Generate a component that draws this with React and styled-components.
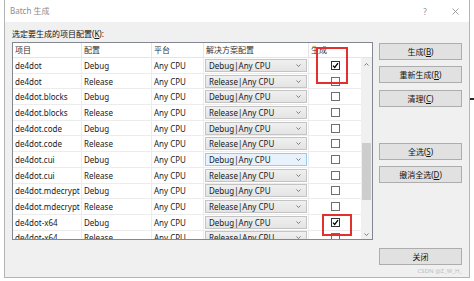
import React from "react";
import styled, { createGlobalStyle } from "styled-components";

const GlobalStyle = createGlobalStyle`
  html, body {
    margin: 0;
    padding: 0;
    background: #fff;
  }
  body {
    font-family: "Noto Sans", "Noto Sans CJK SC", sans-serif;
    font-size: 8px;
    color: #1a1a1a;
  }
  * {
    box-sizing: border-box;
  }
`;

// DATA
const rows = [
  ["de4dot", "Debug", true],
  ["de4dot", "Release", false],
  ["de4dot.blocks", "Debug", false],
  ["de4dot.blocks", "Release", false],
  ["de4dot.code", "Debug", false],
  ["de4dot.code", "Release", false],
  ["de4dot.cui", "Debug", false, true],
  ["de4dot.cui", "Release", false],
  ["de4dot.mdecrypt", "Debug", false],
  ["de4dot.mdecrypt", "Release", false],
  ["de4dot-x64", "Debug", true],
  ["de4dot-x64", "Release", false],
];

const Chevron = ({ up }) => (
  <svg width="5" height="3" viewBox="0 0 5 3">
    <path
      d={up ? "M0.5 2.5 L2.5 0.5 L4.5 2.5" : "M0.5 0.5 L2.5 2.5 L4.5 0.5"}
      stroke="#707070"
      strokeWidth="0.9"
      fill="none"
    />
  </svg>
);

const App = () => {
  return (
    <>
      <GlobalStyle />
      <Screen>
        <Window>
          <TitleBar>
            <Title>Batch 生成</Title>
            <TitleButton>?</TitleButton>
            <TitleButton>
              <svg width="7" height="7" viewBox="0 0 7 7">
                <path d="M0.5 0.5 L6.5 6.5 M6.5 0.5 L0.5 6.5" stroke="#8a8a8a" strokeWidth="0.8" />
              </svg>
            </TitleButton>
          </TitleBar>

          <Body>
            <Caption>
              选定要生成的项目配置(<u>K</u>):
            </Caption>

            <Grid>
              <HeadRow>
                <HeadCell>项目</HeadCell>
                <HeadCell>配置</HeadCell>
                <HeadCell>平台</HeadCell>
                <HeadCell>解决方案配置</HeadCell>
                <HeadCell last>生成</HeadCell>
              </HeadRow>
              <BodyWrap>
                <Rows>
                  {rows.map(([project, config, checked, hover], index) => (
                    <Row key={index}>
                      <Cell>{project}</Cell>
                      <Cell>{config}</Cell>
                      <Cell>Any CPU</Cell>
                      <ComboCell>
                        <Combo hover={hover}>
                          <span>{config}|Any CPU</span>
                          <Chevron />
                        </Combo>
                      </ComboCell>
                      <CheckCell>
                        <CheckBox checked={checked}>
                          {checked && (
                            <svg width="7" height="7" viewBox="0 0 7 7">
                              <path d="M1 3.6 L2.7 5.4 L6 1.1" stroke="#000" strokeWidth="1.3" fill="none" />
                            </svg>
                          )}
                        </CheckBox>
                      </CheckCell>
                    </Row>
                  ))}
                </Rows>
                <ScrollBar>
                  <ArrowUp>
                    <Chevron up />
                  </ArrowUp>
                  <Track>
                    <Thumb />
                  </Track>
                  <ArrowDown>
                    <Chevron />
                  </ArrowDown>
                </ScrollBar>
              </BodyWrap>
            </Grid>

            <Side>
              <Button>
                生成(<u>B</u>)
              </Button>
              <Button>
                重新生成(<u>R</u>)
              </Button>
              <Button gap="36px">
                清理(<u>C</u>)
              </Button>
              <Button>
                全选(<u>S</u>)
              </Button>
              <Button>
                撤消全选(<u>D</u>)
              </Button>
              <Button push>关闭</Button>
            </Side>
          </Body>
        </Window>

        <Mark first />
        <Mark />
        <EdgeTick />
        <Watermark>CSDN @Z_W_H_</Watermark>
      </Screen>
    </>
  );
};

const Screen = styled.div`
  position: relative;
  width: 474px;
  height: 281px;
  overflow: hidden;
  padding-left: 4px;
  background: #fff;
`;

const Window = styled.div`
  width: 466px;
  height: 278px;
  border: 1px solid #b4b4b4;
  border-top: none;
  background: #f0f0f0;
  display: flex;
  flex-direction: column;
`;

const TitleBar = styled.div`
  height: 22px;
  background: #fff;
  display: flex;
  align-items: center;
  padding-left: 5px;
  gap: 2px;
`;

const Title = styled.div`
  flex: 1;
  color: #8c8c8c;
  font-size: 8px;
  line-height: 12px;
`;

const TitleButton = styled.div`
  width: 28px;
  height: 22px;
  display: flex;
  align-items: center;
  justify-content: center;
  color: #8c8c8c;
  font-size: 8px;
`;

const Body = styled.div`
  flex: 1;
  display: grid;
  grid-template-columns: 361px 83px;
  grid-template-rows: auto 1fr;
  column-gap: 6px;
  padding: 6px 0 12px 7px;
`;

const Caption = styled.div`
  grid-column: 1 / span 2;
  height: 12px;
  line-height: 12px;
  margin-bottom: 2px;
  color: #111;

  u {
    text-underline-offset: 1px;
  }
`;

const Grid = styled.div`
  align-self: start;
  height: 198px;
  border: 1px solid #828790;
  background: #fff;
  display: flex;
  flex-direction: column;
  overflow: hidden;
`;

const HeadRow = styled.div`
  display: grid;
  grid-template-columns: 69px 70px 52px 105px 1fr;
  height: 15px;
  flex-shrink: 0;
  border-bottom: 1px solid #e5e5e5;
`;

const HeadCell = styled.div`
  padding-left: 2px;
  line-height: 14px;
  color: #333;
  border-right: ${(p) => (p.last ? "none" : "1px solid #e5e5e5")};
  white-space: nowrap;
`;

const BodyWrap = styled.div`
  flex: 1;
  min-height: 0;
  display: flex;
`;

const Rows = styled.div`
  flex: 1;
  overflow: hidden;
`;

const Row = styled.div`
  display: grid;
  grid-template-columns: 69px 70px 52px 105px 52px;
  height: 15.7px;
  border-bottom: 1px solid #ececec;
`;

const Cell = styled.div`
  display: flex;
  align-items: center;
  padding-left: 2px;
  border-right: 1px solid #ececec;
  white-space: nowrap;
  overflow: hidden;
  color: #1a1a1a;
`;

const ComboCell = styled(Cell)`
  padding: 0 1px;
`;

const Combo = styled.div`
  flex: 1;
  height: 13px;
  display: flex;
  align-items: center;
  justify-content: space-between;
  padding: 0 5px 0 3px;
  border: 1px solid ${(p) => (p.hover ? "#9cc7ee" : "#c4c4c4")};
  background: ${(p) =>
    p.hover ? "#e8f2fc" : "linear-gradient(#f0f0f0, #e4e4e4)"};
  color: #1a1a1a;
`;

const CheckCell = styled.div`
  display: flex;
  align-items: center;
  justify-content: center;
`;

const CheckBox = styled.div`
  width: 9px;
  height: 9px;
  border: 1px solid ${(p) => (p.checked ? "#333" : "#6f6f6f")};
  background: #fff;
  display: flex;
  align-items: center;
  justify-content: center;
`;

const ScrollBar = styled.div`
  width: 11px;
  flex-shrink: 0;
  background: #f0f0f0;
  display: flex;
  flex-direction: column;
`;

const ArrowUp = styled.div`
  height: 12px;
  display: flex;
  align-items: center;
  justify-content: center;
`;

const ArrowDown = styled(ArrowUp)`
  height: 10px;
`;

const Track = styled.div`
  flex: 1;
  padding: 0 1px;
`;

const Thumb = styled.div`
  margin-top: 73px;
  height: 57px;
  background: #cdcdcd;
`;

const Side = styled.div`
  display: flex;
  flex-direction: column;
  padding-top: 0.5px;
`;

const Button = styled.div`
  height: 17px;
  flex-shrink: 0;
  display: flex;
  align-items: center;
  justify-content: center;
  border: 1px solid #adadad;
  background: #e1e1e1;
  color: #111;
  margin-bottom: ${(p) => p.gap || "6.5px"};
  margin-top: ${(p) => (p.push ? "auto" : "0")};

  &:last-child {
    margin-bottom: 0;
  }

  u {
    text-underline-offset: 1px;
  }
`;

// red annotation boxes drawn over the screenshot
const Mark = styled.div`
  position: absolute;
  left: ${(p) => (p.first ? "316px" : "322px")};
  top: ${(p) => (p.first ? "47px" : "214px")};
  width: ${(p) => (p.first ? "32px" : "30px")};
  height: ${(p) => (p.first ? "37px" : "22px")};
  border: 2px solid #e2312d;
`;

// bit of the window behind, peeking out at the right edge
const EdgeTick = styled.div`
  position: absolute;
  left: 470px;
  top: 98px;
  width: 4px;
  height: 2px;
  background: #2a2a2a;
`;

const Watermark = styled.div`
  position: absolute;
  right: 12px;
  top: 267px;
  font-size: 6px;
  line-height: 8px;
  color: #bdbdbd;
`;

export default App;
